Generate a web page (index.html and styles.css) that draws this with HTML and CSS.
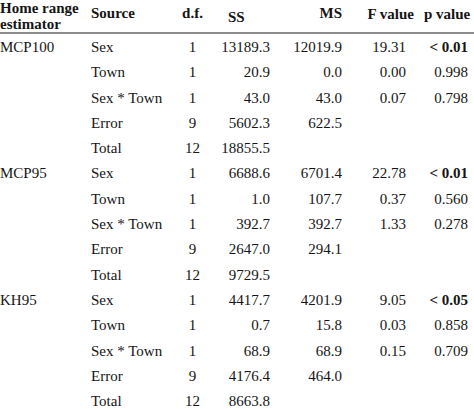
FILE: index.html
```html
<!DOCTYPE html>
<html>
<head>
<meta charset="utf-8">
<link rel="stylesheet" href="styles.css">
</head>
<body>
<table class="anova">
  <colgroup>
    <col class="c-est"><col class="c-src"><col class="c-df"><col class="c-ss"><col class="c-ms"><col class="c-f"><col class="c-p">
  </colgroup>
  <thead>
    <tr>
      <th class="h-est">Home range<br>estimator</th>
      <th class="h-src">Source</th>
      <th class="h-df">d.f.</th>
      <th class="h-ss">SS</th>
      <th class="h-ms">MS</th>
      <th class="h-f">F value</th>
      <th class="h-p">p value</th>
    </tr>
  </thead>
  <tbody>
    <tr class="first"><td>MCP100</td><td>Sex</td><td class="df">1</td><td class="num">13189.3</td><td class="num">12019.9</td><td class="f">19.31</td><td class="p"><b>&lt; 0.01</b></td></tr>
    <tr><td></td><td>Town</td><td class="df">1</td><td class="num">20.9</td><td class="num">0.0</td><td class="f">0.00</td><td class="p">0.998</td></tr>
    <tr><td></td><td>Sex * Town</td><td class="df">1</td><td class="num">43.0</td><td class="num">43.0</td><td class="f">0.07</td><td class="p">0.798</td></tr>
    <tr><td></td><td>Error</td><td class="df">9</td><td class="num">5602.3</td><td class="num">622.5</td><td class="f"></td><td class="p"></td></tr>
    <tr><td></td><td>Total</td><td class="df">12</td><td class="num">18855.5</td><td class="num"></td><td class="f"></td><td class="p"></td></tr>
    <tr><td>MCP95</td><td>Sex</td><td class="df">1</td><td class="num">6688.6</td><td class="num">6701.4</td><td class="f">22.78</td><td class="p"><b>&lt; 0.01</b></td></tr>
    <tr><td></td><td>Town</td><td class="df">1</td><td class="num">1.0</td><td class="num">107.7</td><td class="f">0.37</td><td class="p">0.560</td></tr>
    <tr><td></td><td>Sex * Town</td><td class="df">1</td><td class="num">392.7</td><td class="num">392.7</td><td class="f">1.33</td><td class="p">0.278</td></tr>
    <tr><td></td><td>Error</td><td class="df">9</td><td class="num">2647.0</td><td class="num">294.1</td><td class="f"></td><td class="p"></td></tr>
    <tr><td></td><td>Total</td><td class="df">12</td><td class="num">9729.5</td><td class="num"></td><td class="f"></td><td class="p"></td></tr>
    <tr><td>KH95</td><td>Sex</td><td class="df">1</td><td class="num">4417.7</td><td class="num">4201.9</td><td class="f">9.05</td><td class="p"><b>&lt; 0.05</b></td></tr>
    <tr><td></td><td>Town</td><td class="df">1</td><td class="num">0.7</td><td class="num">15.8</td><td class="f">0.03</td><td class="p">0.858</td></tr>
    <tr><td></td><td>Sex * Town</td><td class="df">1</td><td class="num">68.9</td><td class="num">68.9</td><td class="f">0.15</td><td class="p">0.709</td></tr>
    <tr><td></td><td>Error</td><td class="df">9</td><td class="num">4176.4</td><td class="num">464.0</td><td class="f"></td><td class="p"></td></tr>
    <tr><td></td><td>Total</td><td class="df">12</td><td class="num">8663.8</td><td class="num"></td><td class="f"></td><td class="p"></td></tr>
  </tbody>
</table>
</body>
</html>
```
FILE: styles.css
```css
html, body {
  margin: 0;
  padding: 0;
  background: #ffffff;
}
body {
  font-family: "Liberation Serif", "Times New Roman", serif;
  font-size: 15px;
  color: #151515;
  width: 474px;
  height: 409px;
  overflow: hidden;
}
.anova {
  width: 474px;
  border-collapse: collapse;
  table-layout: fixed;
}
.c-est { width: 91px; }
.c-src { width: 84px; }
.c-df { width: 35px; }
.c-ss { width: 60px; }
.c-ms { width: 72px; }
.c-f { width: 73px; }
.c-p { width: 59px; }

.anova th {
  font-weight: bold;
  line-height: 16px;
  height: 32px;
  padding: 0;
  vertical-align: top;
  white-space: nowrap;
  border-bottom: 2px solid #8c8c8c;
  box-sizing: border-box;
}
.anova th.h-est { text-align: left; padding-top: 0; }
.anova th.h-src { text-align: left; padding-top: 5px; }
.anova th.h-df { text-align: center; padding-top: 5px; }
.anova th.h-ss { text-align: left; padding: 9px 0 0 18px; }
.anova th.h-ms { text-align: right; padding-top: 5px; }
.anova th.h-f { text-align: right; padding-top: 6px; padding-right: 1px; }
.anova th.h-p { text-align: left; padding-top: 6px; padding-left: 9px; overflow: visible; }

.anova td {
  padding: 0;
  line-height: 25.3px;
  height: 25.3px;
  white-space: nowrap;
  text-align: left;
}
.anova tr.first td { padding-top: 1px; }
.anova td.df { text-align: center; }
.anova td.num { text-align: right; }
.anova td.f { text-align: right; padding-right: 9px; }
.anova td.p { text-align: right; padding-right: 6px; }
```
